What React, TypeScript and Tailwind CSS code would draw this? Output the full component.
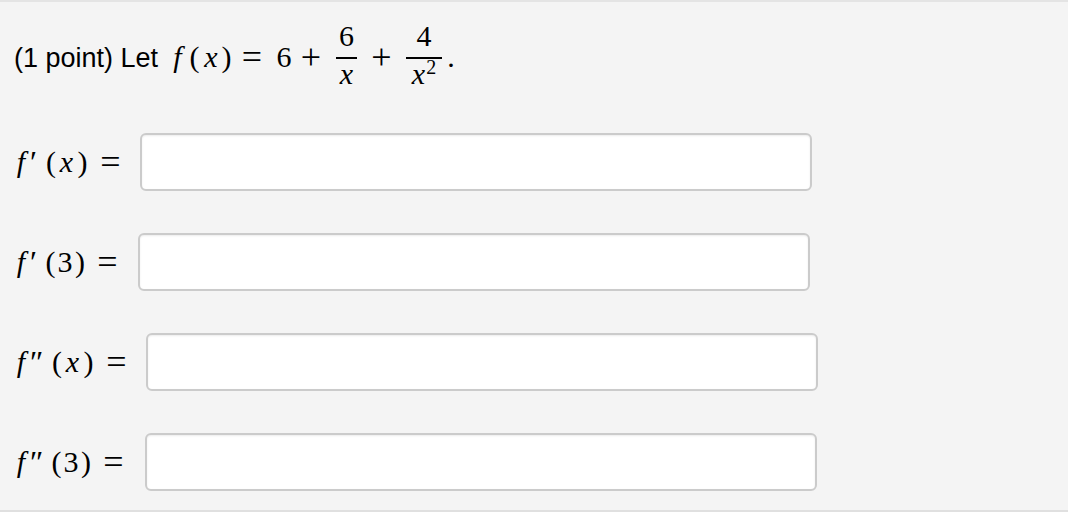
import React from "react";

const serif = "font-['Liberation_Serif','Times_New_Roman',serif]";

// one glyph in a fixed-width cell so the spacing follows the reference layout
function G({ children, className = "" }: { children: React.ReactNode; className?: string }) {
  return <span className={`inline-block text-center leading-none ${className}`}>{children}</span>;
}

function Frac({ num, den, className = "" }: { num: React.ReactNode; den: React.ReactNode; className?: string }) {
  return (
    <span className={`inline-flex flex-col items-stretch pb-[4px] ${serif} ${className}`}>
      <span className="leading-none text-center mb-[6px]">{num}</span>
      <span className="h-[1.5px] bg-black" />
      <span className="leading-none text-center">{den}</span>
    </span>
  );
}

type Row = {
  key: string;
  primes: string;
  arg: React.ReactNode;
  primeW: string;
  parenW: string;
  argW: string;
  closeW: string;
  gap: string;
};

const rows: Row[] = [
  { key: "d1x", primes: "′", arg: <span className="italic">x</span>, primeW: "w-[17px]", parenW: "w-[12px]", argW: "w-[19px]", closeW: "w-[13px]", gap: "ml-[8px]" },
  { key: "d13", primes: "′", arg: "3", primeW: "w-[17px]", parenW: "w-[11px]", argW: "w-[18px]", closeW: "w-[12px]", gap: "ml-[9px]" },
  { key: "d2x", primes: "″", arg: <span className="italic">x</span>, primeW: "w-[23px]", parenW: "w-[12px]", argW: "w-[19px]", closeW: "w-[13px]", gap: "ml-[8px]" },
  { key: "d23", primes: "″", arg: "3", primeW: "w-[23px]", parenW: "w-[11px]", argW: "w-[18px]", closeW: "w-[12px]", gap: "ml-[10px]" },
];

export default function App() {
  return (
    <div className="min-h-[528px] bg-white">
      <div className="h-[512px] bg-[#f4f4f4] border-t-2 border-t-[#e4e4e4] border-b-2 border-b-[#e0e0e0] pl-[14px] pt-[23px] text-black">
        {/* problem statement */}
        <div className="flex items-center h-[64px]">
          <span className="inline-block w-[153px] font-['Liberation_Sans',Arial,sans-serif] text-[27px] leading-none whitespace-nowrap pt-[2px]">
            (1 point) Let
          </span>
          <span className={`${serif} text-[30px] flex items-center whitespace-nowrap`}>
            <G className="w-[21px] italic">f</G>
            <G className="w-[13px]">(</G>
            <G className="w-[20px] italic">x</G>
            <G className="w-[11px]">)</G>
            <G className="w-[40px] text-[36px]">=</G>
            <G className="w-[24px]">6</G>
            <G className="w-[30px] text-[36px]">+</G>
            <Frac className="w-[21px] mx-[10px]" num="6" den={<span className="italic">x</span>} />
            <G className="w-[29px] text-[36px]">+</G>
            <Frac
              className="w-[36px] ml-[10px]"
              num="4"
              den={
                <span>
                  <span className="italic">x</span>
                  <sup className="text-[20px] ml-[1px]">2</sup>
                </span>
              }
            />
            <G className="w-[18px]">.</G>
          </span>
        </div>

        {/* answer rows */}
        <div className="mt-[44px] flex flex-col gap-[42px]">
          {rows.map((r) => (
            <div key={r.key} className="flex items-center">
              <span className={`${serif} text-[30px] flex items-center whitespace-nowrap`}>
                <G className="w-[14px] italic">f</G>
                <G className={`${r.primeW} text-left text-[32px] pl-[2px]`}>{r.primes}</G>
                <G className={r.parenW}>(</G>
                <G className={r.argW}>{r.arg}</G>
                <G className={r.closeW}>)</G>
                <G className="w-[43px] text-[36px]">=</G>
              </span>
              <input
                type="text"
                aria-label={`answer ${r.key}`}
                className={`${r.gap} w-[672px] h-[58px] bg-white border-2 border-[#cbcbcb] rounded-[6px] shadow-[inset_0_1px_2px_rgba(0,0,0,0.08)] outline-none px-2 text-[20px]`}
              />
            </div>
          ))}
        </div>
      </div>
    </div>
  );
}
